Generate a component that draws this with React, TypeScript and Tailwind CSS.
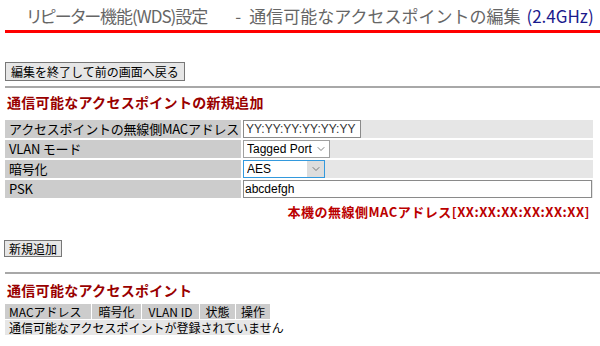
import { ChevronDown } from "lucide-react";

const jp = "font-['Noto_Sans_CJK_JP',sans-serif]";

type Row = { label: string; field: React.ReactNode };

function SelectBox({
  value,
  options,
  width,
  focused = false,
}: {
  value: string;
  options: string[];
  width: string;
  focused?: boolean;
}) {
  return (
    <div className={`relative flex h-[18px] ${width}`}>
      <select
        defaultValue={value}
        className={`h-[18px] w-full appearance-none rounded-none border bg-white py-0 pl-[3px] font-['Liberation_Sans',sans-serif] text-[12px] leading-[16px] text-black outline-none ${
          focused ? "border-[#3399dd]" : "border-[#a0a0a0]"
        }`}
      >
        {options.map((o) => (
          <option key={o}>{o}</option>
        ))}
      </select>
      <span
        className={`pointer-events-none absolute top-[1px] right-[1px] bottom-[1px] flex w-[17px] items-center justify-center ${
          focused ? "bg-[#dddddd]" : "bg-white"
        }`}
      >
        <ChevronDown className="h-3 w-3 stroke-[1.5] text-[#555]" />
      </span>
    </div>
  );
}

export default function App() {
  const rows: Row[] = [
    {
      label: "アクセスポイントの無線側MACアドレス",
      field: (
        <input
          defaultValue="YY:YY:YY:YY:YY:YY"
          className="h-[18px] w-[118px] border border-[#8a8a8a] bg-white px-[2px] py-0 font-['Liberation_Sans',sans-serif] text-[12px] leading-[16px] text-[#333] outline-none"
        />
      ),
    },
    {
      label: "VLAN モード",
      field: <SelectBox value="Tagged Port" options={["Tagged Port", "Untagged Port"]} width="w-[87px]" />,
    },
    {
      label: "暗号化",
      field: <SelectBox value="AES" options={["AES", "TKIP", "なし"]} width="w-[82px]" focused />,
    },
    {
      label: "PSK",
      field: (
        <input
          defaultValue="abcdefgh"
          className="h-[18px] w-[349px] border border-[#8a8a8a] bg-white px-[1px] py-0 font-['Liberation_Sans',sans-serif] text-[12px] leading-[16px] text-black outline-none"
        />
      ),
    },
  ];

  return (
    <div className={`h-[346px] w-[600px] overflow-hidden bg-white ${jp} text-black`}>
      <h1 className="pt-[5px] pl-[27px] text-[17px] leading-[22px] font-normal whitespace-nowrap text-[#666666]">
        <span className="tracking-[-1px] [font-feature-settings:'palt']">リピーター機能(WDS)設定</span>
        <span className="ml-[28px] mr-[8px] inline-block">-</span>
        <span>通信可能なアクセスポイントの編集</span>
        <span className="ml-[6px] text-[#1a1a8c]">(2.4GHz)</span>
      </h1>
      <div className="mt-[3px] ml-[5px] h-[3px] bg-[#ff0000]" />

      <div className="mt-[29px] flex pl-[5px]">
        <button className="h-[19px] border border-[#777] bg-[#e6e6e6] px-[5px] py-0 text-[12px] leading-[15px] text-black">
          編集を終了して前の画面へ戻る
        </button>
      </div>
      <div className="mt-[5px] ml-[5px] h-[2px] bg-[#a8a8a8]" />

      <h2 className="mt-[5px] pl-[7px] text-[14px] leading-[18px] font-bold tracking-[0.3px] text-[#990000]">
        通信可能なアクセスポイントの新規追加
      </h2>
      <div className="mt-[9px] ml-[5px] grid w-[588px] grid-cols-[236px_1fr] gap-[2px]">
        {rows.map((r) => (
          <div key={r.label} className="contents">
            <div className="flex h-[18px] items-center bg-[#cccccc] pl-[4px] text-[13px] leading-[18px] tracking-[-0.2px] whitespace-nowrap">
              {r.label}
            </div>
            <div className="flex h-[18px] items-center bg-[#e6e6e6]">{r.field}</div>
          </div>
        ))}
      </div>
      <p className="mt-[5px] w-[590px] text-right text-[13px] leading-[17px] font-bold tracking-[0.5px] text-[#bb0000]">
        本機の無線側MACアドレス[XX:XX:XX:XX:XX:XX]
      </p>

      <div className="mt-[20px] flex pl-[4px]">
        <button className="h-[17px] border border-[#777] bg-[#e6e6e6] px-[4px] py-0 text-[12px] leading-[15px] text-black">
          新規追加
        </button>
      </div>
      <div className="mt-[15px] ml-[5px] h-[2px] bg-[#a8a8a8]" />

      <h2 className="mt-[7px] pl-[7px] text-[14px] leading-[18px] font-bold tracking-[0.3px] text-[#990000]">
        通信可能なアクセスポイント
      </h2>
      <div className="mt-[5px] ml-[5px] w-[265px] text-[12px] leading-[15px]">
        <div className="grid grid-cols-[86px_49px_57px_35px_1fr] gap-[1px]">
          <div className="bg-[#cccccc] pl-[4px]">MACアドレス</div>
          <div className="bg-[#cccccc] text-center">暗号化</div>
          <div className="bg-[#cccccc] text-center">VLAN ID</div>
          <div className="bg-[#cccccc] text-center">状態</div>
          <div className="bg-[#cccccc] text-center">操作</div>
        </div>
        <div className="mt-[1px] bg-[#e6e6e6] pl-[4px] whitespace-nowrap">
          通信可能なアクセスポイントが登録されていません
        </div>
      </div>
    </div>
  );
}
